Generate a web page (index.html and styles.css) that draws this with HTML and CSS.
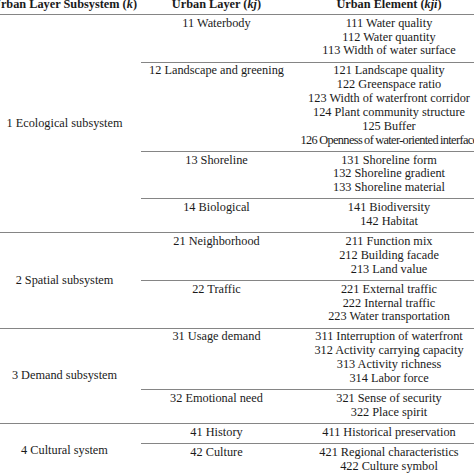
FILE: index.html
```html
<!DOCTYPE html>
<html>
<head>
<meta charset="utf-8">
<link rel="stylesheet" href="styles.css">
</head>
<body>
<div class="table">
  <div class="head">
    <div class="c1">Urban Layer Subsystem (<i>k</i>)</div>
    <div class="c2">Urban Layer (<i>kj</i>)</div>
    <div class="c3">Urban Element (<i>kji</i>)</div>
  </div>

  <div class="group">
    <div class="c1 sys">1 Ecological subsystem</div>
    <div class="layers">
      <div class="layer">
        <div class="c2">11 Waterbody</div>
        <div class="c3"><div>111 Water quality</div><div>112 Water quantity</div><div>113 Width of water surface</div></div>
      </div>
      <div class="layer">
        <div class="c2">12 Landscape and greening</div>
        <div class="c3"><div>121 Landscape quality</div><div>122 Greenspace ratio</div><div>123 Width of waterfront corridor</div><div>124 Plant community structure</div><div>125 Buffer</div><div class="tight">126 Openness of water-oriented interface</div></div>
      </div>
      <div class="layer">
        <div class="c2">13 Shoreline</div>
        <div class="c3"><div>131 Shoreline form</div><div>132 Shoreline gradient</div><div>133 Shoreline material</div></div>
      </div>
      <div class="layer">
        <div class="c2">14 Biological</div>
        <div class="c3"><div>141 Biodiversity</div><div>142 Habitat</div></div>
      </div>
    </div>
  </div>

  <div class="group">
    <div class="c1 sys">2 Spatial subsystem</div>
    <div class="layers">
      <div class="layer">
        <div class="c2">21 Neighborhood</div>
        <div class="c3"><div>211 Function mix</div><div>212 Building facade</div><div>213 Land value</div></div>
      </div>
      <div class="layer">
        <div class="c2">22 Traffic</div>
        <div class="c3"><div>221 External traffic</div><div>222 Internal traffic</div><div>223 Water transportation</div></div>
      </div>
    </div>
  </div>

  <div class="group">
    <div class="c1 sys">3 Demand subsystem</div>
    <div class="layers">
      <div class="layer">
        <div class="c2">31 Usage demand</div>
        <div class="c3"><div>311 Interruption of waterfront</div><div>312 Activity carrying capacity</div><div>313 Activity richness</div><div>314 Labor force</div></div>
      </div>
      <div class="layer">
        <div class="c2">32 Emotional need</div>
        <div class="c3"><div>321 Sense of security</div><div>322 Place spirit</div></div>
      </div>
    </div>
  </div>

  <div class="group">
    <div class="c1 sys">4 Cultural system</div>
    <div class="layers">
      <div class="layer">
        <div class="c2">41 History</div>
        <div class="c3"><div>411 Historical preservation</div></div>
      </div>
      <div class="layer">
        <div class="c2">42 Culture</div>
        <div class="c3"><div>421 Regional characteristics</div><div>422 Culture symbol</div></div>
      </div>
    </div>
  </div>
</div>
</body>
</html>
```

FILE: styles.css
```css
html, body {
  margin: 0;
  padding: 0;
  background: #ffffff;
  overflow: hidden;
}
body {
  width: 474px;
  height: 474px;
  font-family: "Liberation Serif", "Times New Roman", serif;
  font-size: 12.3px;
  line-height: 13.83px;
  color: #1a1a1a;
}
.table {
  width: 498px;
  margin-left: -12px;
}
.c1 {
  width: 153px;
  flex: none;
  text-align: center;
  white-space: nowrap;
}
.c2 {
  width: 151px;
  flex: none;
  text-align: center;
  white-space: nowrap;
}
.c3 {
  width: 194px;
  flex: none;
  text-align: center;
  white-space: nowrap;
}
.head {
  display: flex;
  margin-top: -2px;
  padding-bottom: 2.17px;
  border-bottom: 1px solid #858585;
  font-weight: bold;
}
.group {
  display: flex;
  align-items: center;
}
.group + .group {
  border-top: 1px solid #858585;
}
.sys {
  align-self: center;
}
.layers {
  display: flex;
  flex-direction: column;
}
.layer {
  display: flex;
  padding-top: 1.8px;
  padding-bottom: 3.4px;
}
.layer + .layer {
  border-top: 1px solid #858585;
}
.tight {
  letter-spacing: -0.62px;
  word-spacing: -0.4px;
}
```
